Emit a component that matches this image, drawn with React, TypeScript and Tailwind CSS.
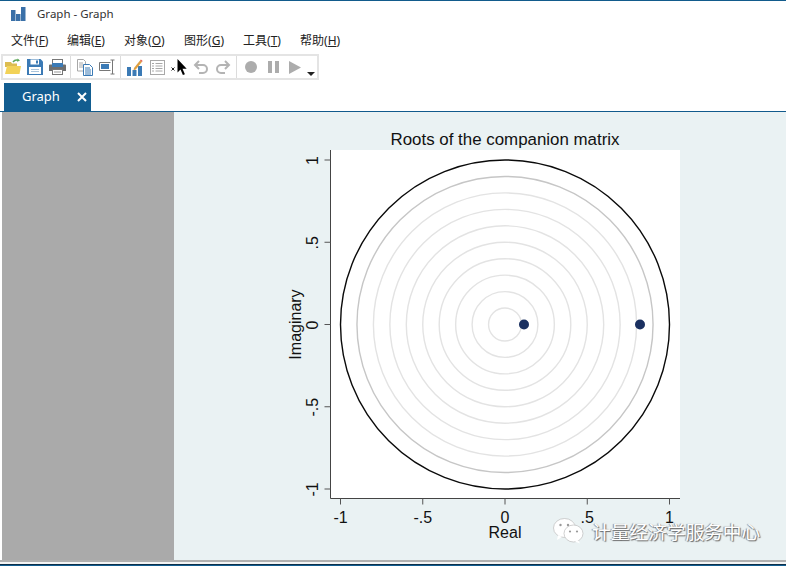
const menus = [
  { label: "文件", key: "F", w: "w-[56px]" },
  { label: "编辑", key: "E", w: "w-[57px]" },
  { label: "对象", key: "O", w: "w-[60px]" },
  { label: "图形", key: "G", w: "w-[59px]" },
  { label: "工具", key: "T", w: "w-[57px]" },
  { label: "帮助", key: "H", w: "w-[60px]" },
]

const rings = [0.9, 0.8, 0.7, 0.6, 0.5, 0.4, 0.3, 0.2, 0.1]
const ticks = [-1, -0.5, 0, 0.5, 1]
const tickLabel = (t: number) => (t === 0 ? "0" : t === 1 ? "1" : t === -1 ? "-1" : t > 0 ? ".5" : "-.5")

function Sep() {
  return (
    <div className="w-[6px] h-[22px] pl-[2px] shrink-0">
      <div className="w-px h-full bg-[#dcdcdc]" />
    </div>
  )
}

function Btn({ children }: { children: React.ReactNode }) {
  return <div className="w-[22px] h-[22px] shrink-0 flex items-center justify-center">{children}</div>
}

function OpenIcon() {
  return (
    <svg width="18" height="18" viewBox="0 0 18 18">
      <path d="M1 4h6l1 1.5h5V9H1z" fill="#dcbc50" />
      <path d="M1 16 L3 8 H17 L15.5 16 Z" fill="#f2d257" />
      <path d="M9 4c1.5-2 3.5-2.5 5.5-1.5" stroke="#5fa85a" strokeWidth="1.5" fill="none" />
      <path d="M13.5 0.5l2.5 2-3 1.2z" fill="#5fa85a" />
    </svg>
  )
}

function SaveIcon() {
  return (
    <svg width="16" height="16" viewBox="0 0 16 16">
      <path d="M0 0h13.5L16 2.5V16H0z" fill="#3b7ab5" />
      <rect x="3.5" y="0.5" width="8.5" height="5" fill="#fff" />
      <rect x="9" y="1.5" width="2" height="3" fill="#3b7ab5" />
      <rect x="2" y="8" width="12" height="7" fill="#fff" />
      <rect x="4" y="10" width="8" height="1" fill="#a9c4dc" />
      <rect x="4" y="12" width="8" height="1" fill="#a9c4dc" />
    </svg>
  )
}

function PrintIcon() {
  return (
    <svg width="17" height="16" viewBox="0 0 17 16">
      <rect x="3.5" y="0.5" width="10" height="5" fill="#fff" stroke="#777" />
      <path d="M1 5.5h15a1 1 0 0 1 1 1V12h-3V10H3v2H0V6.5a1 1 0 0 1 1-1z" fill="#6f6f6f" />
      <rect x="3" y="4" width="11" height="4" fill="#3b7ab5" />
      <rect x="3.5" y="10.5" width="10" height="5" fill="#fff" stroke="#777" />
      <rect x="5" y="12.5" width="7" height="1" fill="#999" />
    </svg>
  )
}

function CopyIcon() {
  return (
    <svg width="16" height="17" viewBox="0 0 16 17">
      <path d="M0.5 0.5h6l2 2V12h-8z" fill="#fff" stroke="#a8a8a8" />
      <path d="M2 4h4M2 6h4M2 8h4" stroke="#a8a8a8" />
      <path d="M6.5 5.5h6l3 3v8h-9z" fill="#fff" stroke="#3b7ab5" />
      <path d="M8 9h5M8 11h6M8 13h6M8 15h6" stroke="#3b7ab5" />
    </svg>
  )
}

function RenameIcon() {
  return (
    <svg width="17" height="16" viewBox="0 0 17 16">
      <path d="M11.5 3.5h-11v8h11" fill="#fff" stroke="#777" />
      <rect x="2" y="5" width="8" height="5" fill="#3b7ab5" />
      <path d="M11.5 1h4M13.5 1v14M11.5 15h4" stroke="#777" fill="none" />
    </svg>
  )
}

function ChartIcon() {
  return (
    <svg width="16" height="17" viewBox="0 0 16 17">
      <rect x="0" y="8" width="4" height="9" fill="#3b7ab5" />
      <rect x="5.5" y="11" width="4" height="6" fill="#3b7ab5" />
      <rect x="11" y="7" width="4" height="10" fill="#3b7ab5" />
      <path d="M7 9l6-7.5 1.8 1.4-6 7.5-2.3.8z" fill="#e0a040" />
      <path d="M13 1.5l.9-1 1.8 1.4-.9 1z" fill="#e0604a" />
    </svg>
  )
}

function ListIcon() {
  return (
    <svg width="15" height="15" viewBox="0 0 15 15">
      <rect x="0.5" y="0.5" width="14" height="14" fill="#fff" stroke="#a8a8a8" />
      <path d="M2 3.5h2M2 6h2M2 8.5h2M2 11h2M5.5 3.5h7M5.5 6h7M5.5 8.5h7M5.5 11h7" stroke="#a8a8a8" />
    </svg>
  )
}

function CursorIcon() {
  return (
    <svg width="22" height="20" viewBox="0 0 22 20">
      <path d="M3.5 10.5l3 3M6.5 10.5l-3 3" stroke="#222" strokeWidth="1" />
      <path d="M9.5 2v13.5l3-3 2.4 5.6 2-.9-2.4-5.4h4.2z" fill="#000" />
    </svg>
  )
}

function UndoIcon({ flip }: { flip?: boolean }) {
  return (
    <svg width="16" height="14" viewBox="0 0 16 14" className={flip ? "-scale-x-100" : ""}>
      <path d="M3 5h7a4 4 0 0 1 0 8H6" fill="none" stroke="#b4b4b4" strokeWidth="2" />
      <path d="M6 1L2 5l4 4" fill="none" stroke="#b4b4b4" strokeWidth="2" />
    </svg>
  )
}

function Toolbar() {
  return (
    <div className="shrink-0 ml-px w-[318px] h-[26px] border-2 border-[#e4e4e4] flex items-center box-border">
      <div className="w-0 h-px -ml-px" />
      <Btn><OpenIcon /></Btn>
      <Btn><SaveIcon /></Btn>
      <Btn><PrintIcon /></Btn>
      <Sep />
      <Btn><CopyIcon /></Btn>
      <Btn><RenameIcon /></Btn>
      <Sep />
      <Btn><ChartIcon /></Btn>
      <Btn><ListIcon /></Btn>
      <Btn><CursorIcon /></Btn>
      <Btn><UndoIcon /></Btn>
      <Btn><UndoIcon flip /></Btn>
      <Sep />
      <Btn><div className="w-[12px] h-[12px] rounded-full bg-[#acacac]" /></Btn>
      <Btn>
        <div className="flex gap-[3px]">
          <div className="w-[4px] h-[12px] bg-[#acacac]" />
          <div className="w-[4px] h-[12px] bg-[#acacac]" />
        </div>
      </Btn>
      <Btn>
        <svg width="12" height="13" viewBox="0 0 12 13"><path d="M0 0l12 6.5L0 13z" fill="#acacac" /></svg>
      </Btn>
      <svg width="9" height="4" viewBox="0 0 9 4" className="mt-[14px] ml-px shrink-0"><path d="M0 0h8L4 4z" fill="#222" /></svg>
    </div>
  )
}

function RootsChart() {
  // center of the unit circle inside the 612x448 graph area
  const cx = 331
  const cy = 212.5
  const r = 164.5
  return (
    <svg width="612" height="448" viewBox="0 0 612 448" className="block" fontFamily="'Liberation Sans', Arial, sans-serif">
      <rect x="157" y="38" width="349" height="348" fill="#fff" />
      {rings.map((v) => (
        <circle key={v} cx={cx} cy={cy} r={r * v} fill="none" stroke={v === 0.9 ? "#c6c6c6" : "#e3e3e3"} strokeWidth="1.4" />
      ))}
      <circle cx={cx} cy={cy} r={r} fill="none" stroke="#0a0a0a" strokeWidth="1.4" />
      <circle cx={350} cy={cy} r="5" fill="#1a3060" />
      <circle cx={466} cy={cy} r="5" fill="#1a3060" />
      <path d="M156.5 38V386.5H506" fill="none" stroke="#444" strokeWidth="1" />
      {ticks.map((t) => (
        <g key={t}>
          <path d={`M${cx + t * r} 386.5v6`} stroke="#555" />
          <text x={cx + t * r} y="411" fontSize="16" textAnchor="middle" fill="#111">{tickLabel(t)}</text>
          <path d={`M150.5 ${cy - t * r}h6`} stroke="#555" />
          <text
            transform={`translate(144 ${cy - t * r + 0.5}) rotate(-90)`}
            fontSize="16"
            textAnchor="middle"
            fill="#111"
          >
            {tickLabel(t)}
          </text>
        </g>
      ))}
      <text x="331" y="33" fontSize="16.9" textAnchor="middle" fill="#111">Roots of the companion matrix</text>
      <text x="331" y="426" fontSize="16" textAnchor="middle" fill="#111">Real</text>
      <text transform={`translate(127 ${cy}) rotate(-90)`} fontSize="16" textAnchor="middle" fill="#111">Imaginary</text>
    </svg>
  )
}

function Watermark() {
  return (
    <div className="absolute left-[379px] top-[406px] flex items-center gap-[8px]">
      <svg width="31" height="26" viewBox="0 0 31 26">
        <ellipse cx="11.5" cy="10" rx="11" ry="9.5" fill="#fff" stroke="#bbb" strokeWidth="0.7" />
        <path d="M5 17l-1 5 5-3z" fill="#fff" />
        <circle cx="7.5" cy="7" r="1.2" fill="#999" />
        <circle cx="15" cy="7" r="1.2" fill="#999" />
        <ellipse cx="20.5" cy="15.5" rx="9.5" ry="8.5" fill="#fff" stroke="#bbb" strokeWidth="0.7" />
        <path d="M25 22l2 3.5-5-2z" fill="#fff" />
        <circle cx="17" cy="13.5" r="1.1" fill="#999" />
        <circle cx="24" cy="13.5" r="1.1" fill="#999" />
      </svg>
      <span className="text-[18.7px] leading-none text-white font-['Noto_Sans_CJK_SC',sans-serif] [text-shadow:1px_1px_1px_#666,-1px_0_1px_#888] whitespace-nowrap">
        计量经济学服务中心
      </span>
    </div>
  )
}

export default function App() {
  return (
    <div className="w-[786px] h-[566px] overflow-hidden bg-white flex flex-col font-['Noto_Sans','Noto_Sans_CJK_SC',sans-serif] text-[#222]">
      <div className="h-px shrink-0 bg-[#125b8c]" />
      <div className="h-[27px] shrink-0 flex items-center pl-[11px]">
        <svg width="15" height="15" viewBox="0 0 15 15">
          <rect x="0" y="3" width="4.5" height="11" fill="#3a70a8" />
          <rect x="5" y="7" width="4.5" height="7" fill="#3a70a8" />
          <rect x="10" y="0" width="4.5" height="14" fill="#3a70a8" />
        </svg>
        <span className="ml-[11px] -mt-[2px] text-[11.5px] leading-none text-[#333]">Graph - Graph</span>
      </div>
      <div className="h-[26px] shrink-0 flex items-center pl-[11px] text-[12px] leading-none">
        {menus.map((m) => (
          <span key={m.key} className={m.w}>
            {m.label}(<span className="underline">{m.key}</span>)
          </span>
        ))}
      </div>
      <Toolbar />
      <div className="h-[32px] shrink-0 box-border pl-[4px] pt-[3px] border-b border-[#125b8c]">
        <div className="w-[87px] h-[28px] bg-[#125d90] flex items-center text-white text-[13px] pl-[18px]">
          <span className="w-[55px]">Graph</span>
          <svg width="10" height="10" viewBox="0 0 10 10"><path d="M1 1l8 8M9 1l-8 8" stroke="#fff" strokeWidth="2" /></svg>
        </div>
      </div>
      <div className="h-[448px] shrink-0 flex pl-[2px] relative">
        <div className="w-[172px] bg-[#aaaaaa]" />
        <div className="flex-1 bg-[#eaf2f3] relative">
          <RootsChart />
          <Watermark />
        </div>
      </div>
      <div className="h-[2px] shrink-0 bg-[#b0b0b0]" />
      <div className="h-[2px] shrink-0 bg-[#f4f4f4]" />
      <div className="h-px shrink-0 bg-[#0c2f4a]" />
      <div className="h-px shrink-0 bg-[#125d90]" />
    </div>
  )
}
